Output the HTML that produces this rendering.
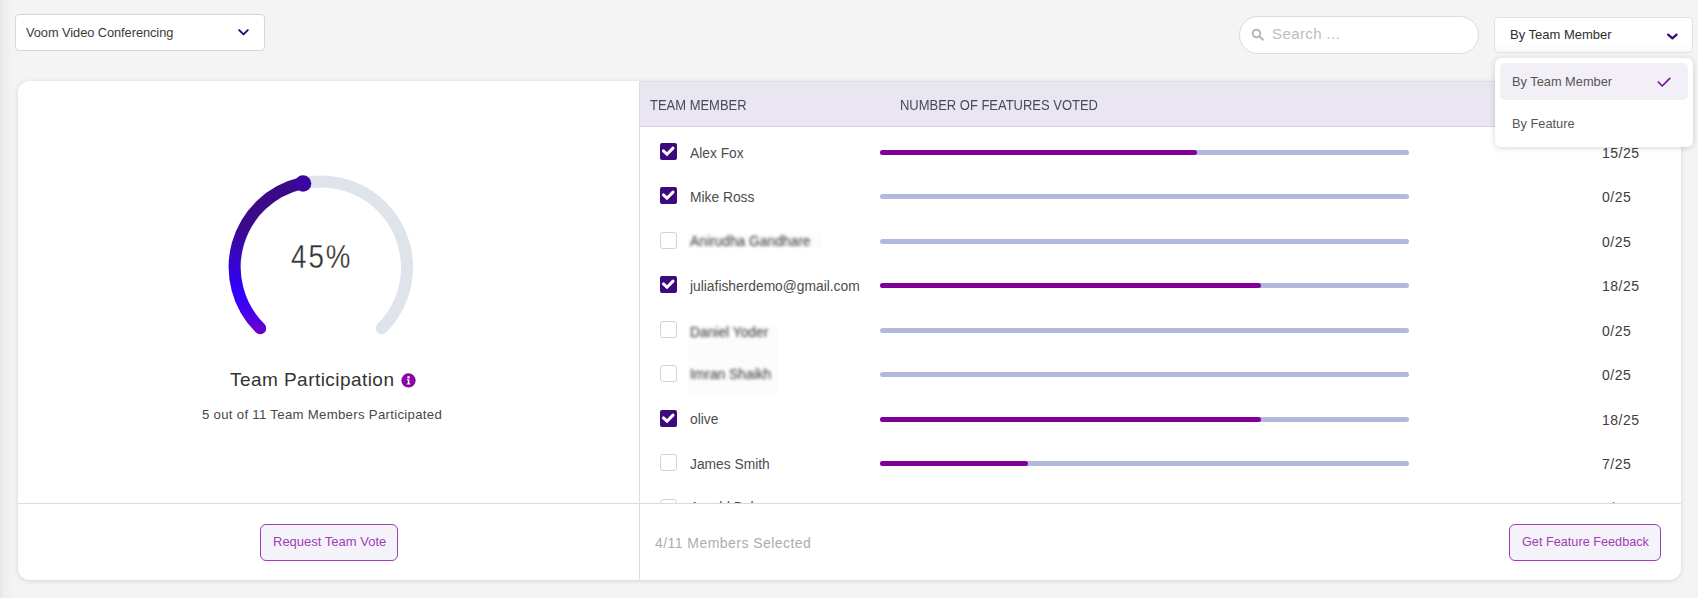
<!DOCTYPE html>
<html>
<head>
<meta charset="utf-8">
<style>
*{box-sizing:border-box;margin:0;padding:0}
html,body{width:1698px;height:598px;overflow:hidden}
body{background:#f4f4f4;font-family:"Liberation Sans",sans-serif;color:#333;position:relative}
.lshadow{position:absolute;left:0;top:0;width:14px;height:598px;background:linear-gradient(to right,#e5e4e9 0px,#e9e9ec 1.5px,#eeeef0 3px,#f0f0f2 7px,#f4f4f4 14px)}
.abs{position:absolute}
.t{position:absolute;white-space:nowrap;line-height:1}
.sel{position:absolute;left:15px;top:14px;width:250px;height:37px;background:#fff;border:1px solid #d6d6d6;border-radius:4px}
.search{position:absolute;left:1239px;top:16px;width:240px;height:38px;background:#fff;border:1px solid #dcdcdc;border-radius:19px}
.sort{position:absolute;left:1494px;top:17px;width:199px;height:36px;background:linear-gradient(#fff 70%,#f9f9fa);border:1px solid #e0e0e4;border-radius:4px}
.card{position:absolute;left:18px;top:81px;width:1663px;height:499px;background:#fff;border-radius:12px;box-shadow:0 1px 5px rgba(0,0,0,0.13);overflow:hidden}
.vdiv{position:absolute;left:621px;top:0;width:1px;height:499px;background:#dddde2}
.hdiv{position:absolute;left:0;top:422px;width:1663px;height:1px;background:#dcdbe2}
.thead{position:absolute;left:622px;top:0;width:1041px;height:46px;background:#e9e5f1;border-top:1px solid #dde0e4;border-bottom:1px solid #d3d0dc}
.cb{position:absolute;left:660px;width:17px;height:17px;border-radius:2px}
.cb.on{background:#3a0a7e}
.cb.off{background:#fff;border:1px solid #d3d3d3;border-radius:3px}
.name{position:absolute;left:690px;font-size:13.8px;color:#4c4c4c;white-space:nowrap;line-height:1}
.blur{filter:blur(1.4px);color:#333;padding:0}
.bar{position:absolute;left:880px;width:529px;height:5px;border-radius:3px;background:#b3b8df}
.fill{position:absolute;left:0;top:0;height:5px;border-radius:3px;background:#800097}
.cnt{position:absolute;left:1602px;font-size:14px;letter-spacing:0.5px;color:#3d3d3d;white-space:nowrap;line-height:1}
.btn{position:absolute;height:37px;border:1.5px solid #a23cb9;border-radius:6px;background:#f4f3f9;color:#a23cb9;font-size:13px;line-height:1}
.menu{position:absolute;left:1495px;top:58px;width:198px;height:89px;background:#fff;border-radius:6px;box-shadow:0 1px 6px rgba(0,0,0,0.16)}
.mi{position:absolute;left:5px;top:5px;width:188px;height:37px;background:#f2eff7;border-radius:5px}
</style>
</head>
<body>
<div class="lshadow"></div>

<!-- product select -->
<div class="sel"></div>
<div class="t" style="left:26px;top:27px;font-size:12.8px;color:#3a3a3a;letter-spacing:-0.05px">Voom Video Conferencing</div>
<svg class="abs" style="left:237px;top:29px" width="12" height="8" viewBox="0 0 12 8"><path d="M2.2 1.1 L6.5 5.4 L10.8 1.1" fill="none" stroke="#36067f" stroke-width="1.9" stroke-linecap="round" stroke-linejoin="round"/></svg>

<!-- search -->
<div class="search"></div>
<svg class="abs" style="left:1251px;top:28px" width="14" height="13" viewBox="0 0 14 13"><circle cx="5.5" cy="5.5" r="3.8" fill="none" stroke="#b9b9b9" stroke-width="2"/><path d="M8.3 8.3 L11.8 11.6" stroke="#b9b9b9" stroke-width="2.2" stroke-linecap="round"/></svg>
<div class="t" style="left:1272px;top:26px;font-size:15px;color:#bdbdbd;letter-spacing:0.4px">Search ...</div>

<!-- sort select -->
<div class="sort"></div>
<div class="t" style="left:1510px;top:28px;font-size:13px;color:#2e2e2e">By Team Member</div>
<svg class="abs" style="left:1666px;top:32px" width="12" height="9" viewBox="0 0 12 9"><path d="M2.2 2.6 L6.4 6.4 L10.6 2.6" fill="none" stroke="#3a0a80" stroke-width="2.3" stroke-linecap="round" stroke-linejoin="round"/></svg>

<!-- card -->
<div class="card">
  <div class="thead"></div>
  <div class="vdiv"></div>
  <div class="hdiv"></div>
</div>

<!-- gauge -->
<svg class="abs" style="left:221px;top:167px" width="200" height="200" viewBox="221 167 200 200">
  <defs>
    <linearGradient id="g1" x1="260" y1="334" x2="300" y2="180" gradientUnits="userSpaceOnUse">
      <stop offset="0" stop-color="#7000c0"/>
      <stop offset="0.09" stop-color="#5000e8"/>
      <stop offset="0.2" stop-color="#3400ff"/>
      <stop offset="0.27" stop-color="#3300f2"/>
      <stop offset="0.45" stop-color="#3806c0"/>
      <stop offset="0.62" stop-color="#3a0a8c"/>
      <stop offset="1" stop-color="#3a0a88"/>
    </linearGradient>
  </defs>
  <path d="M260.2 328.3 A86 86 0 1 1 381.8 328.3" fill="none" stroke="#dfe3ea" stroke-width="12" stroke-linecap="round"/>
  <path d="M260.2 328.3 A86 86 0 0 1 300.9 183.4" fill="none" stroke="url(#g1)" stroke-width="12" stroke-linecap="round"/>
  <circle cx="303" cy="183.5" r="8.3" fill="#3a05a0"/>
</svg>
<svg class="abs" style="left:280px;top:235px" width="90" height="40" viewBox="0 0 90 40"><text x="11" y="32.9" font-family="Liberation Sans" font-size="33" letter-spacing="2.4" fill="#333" stroke="#fff" stroke-width="0.3" transform="translate(11 0) scale(0.84 1) translate(-11 0)">45%</text></svg>
<div class="t" style="left:230px;top:370px;font-size:19px;color:#333;letter-spacing:0.45px">Team Participation</div>
<svg class="abs" style="left:400.5px;top:373px" width="15" height="15" viewBox="0 0 15 15"><circle cx="7.5" cy="7.4" r="7.1" fill="#8406a4"/><circle cx="7.5" cy="4.2" r="1.2" fill="#fff"/><path d="M5.8 6.3 H8.4 V10.4 H9.4 V11.4 H5.8 V10.4 H6.8 V7.3 H5.8 Z" fill="#fff"/></svg>
<div class="t" style="left:202px;top:407.6px;font-size:13.2px;color:#484848;letter-spacing:0.3px">5 out of 11 Team Members Participated</div>

<!-- table header text -->
<div class="t" style="left:650px;top:98.6px;font-size:13.8px;color:#4a4a55;transform:scaleX(0.94);transform-origin:0 0">TEAM MEMBER</div>
<div class="t" style="left:900px;top:98.6px;font-size:13.8px;color:#4a4a55;transform:scaleX(0.94);transform-origin:0 0">NUMBER OF FEATURES VOTED</div>

<!-- rows -->
<div class="rowclip" style="position:absolute;left:640px;top:127px;width:1040px;height:376px;overflow:hidden"><div style="position:absolute;left:-640px;top:-127px;width:1698px;height:598px"><div class="cb on" style="top:143.00px"><svg width="17" height="17" viewBox="0 0 17 17" style="position:absolute;left:0;top:0"><path d="M3.4 7.9 L7 11.2 L13 5.1" fill="none" stroke="#fff" stroke-width="3" stroke-linecap="round" stroke-linejoin="miter"/></svg></div>
<div class="name" style="top:146.70px">Alex Fox</div>
<div class="bar" style="top:150.00px"><div class="fill" style="width:317.4px"></div></div>
<div class="cnt" style="top:145.80px">15/25</div>
<div class="cb on" style="top:187.45px"><svg width="17" height="17" viewBox="0 0 17 17" style="position:absolute;left:0;top:0"><path d="M3.4 7.9 L7 11.2 L13 5.1" fill="none" stroke="#fff" stroke-width="3" stroke-linecap="round" stroke-linejoin="miter"/></svg></div>
<div class="name" style="top:191.15px">Mike Ross</div>
<div class="bar" style="top:194.45px"><div class="fill" style="width:0.0px"></div></div>
<div class="cnt" style="top:190.25px">0/25</div>
<div class="cb off" style="top:231.90px"></div>
<div style="position:absolute;left:688px;top:233px;width:134px;height:15px;background:rgba(0,0,0,0.012)"></div><div style="position:absolute;left:688px;top:325px;width:90px;height:70px;background:rgba(0,0,0,0.012)"></div><div class="name blur" style="top:234.90px">Anirudha Gandhare</div>
<div class="bar" style="top:238.90px"><div class="fill" style="width:0.0px"></div></div>
<div class="cnt" style="top:234.70px">0/25</div>
<div class="cb on" style="top:276.35px"><svg width="17" height="17" viewBox="0 0 17 17" style="position:absolute;left:0;top:0"><path d="M3.4 7.9 L7 11.2 L13 5.1" fill="none" stroke="#fff" stroke-width="3" stroke-linecap="round" stroke-linejoin="miter"/></svg></div>
<div class="name" style="top:280.05px">juliafisherdemo@gmail.com</div>
<div class="bar" style="top:283.35px"><div class="fill" style="width:380.9px"></div></div>
<div class="cnt" style="top:279.15px">18/25</div>
<div class="cb off" style="top:320.80px"></div>
<div class="name blur" style="top:326.30px">Daniel Yoder</div>
<div class="bar" style="top:327.80px"><div class="fill" style="width:0.0px"></div></div>
<div class="cnt" style="top:323.60px">0/25</div>
<div class="cb off" style="top:365.25px"></div>
<div class="name blur" style="top:368.25px">Imran Shaikh</div>
<div class="bar" style="top:372.25px"><div class="fill" style="width:0.0px"></div></div>
<div class="cnt" style="top:368.05px">0/25</div>
<div class="cb on" style="top:409.70px"><svg width="17" height="17" viewBox="0 0 17 17" style="position:absolute;left:0;top:0"><path d="M3.4 7.9 L7 11.2 L13 5.1" fill="none" stroke="#fff" stroke-width="3" stroke-linecap="round" stroke-linejoin="miter"/></svg></div>
<div class="name" style="top:413.40px">olive</div>
<div class="bar" style="top:416.70px"><div class="fill" style="width:380.9px"></div></div>
<div class="cnt" style="top:412.50px">18/25</div>
<div class="cb off" style="top:454.15px"></div>
<div class="name" style="top:457.85px">James Smith</div>
<div class="bar" style="top:461.15px"><div class="fill" style="width:148.1px"></div></div>
<div class="cnt" style="top:456.95px">7/25</div>
<div class="cb off" style="top:498.60px"></div>
<div class="name" style="top:501.3px">Arnold Baker</div>
<div class="bar" style="top:505.60px"><div class="fill" style="width:84.6px"></div></div>
<div class="cnt" style="top:501.40px">4/25</div></div></div>

<!-- footer -->
<div class="btn" style="left:260px;top:524px;width:138px"><span class="t" style="left:12px;top:10px">Request Team Vote</span></div>
<div class="t" style="left:655px;top:536px;font-size:14px;color:#acacac;letter-spacing:0.45px">4/11 Members Selected</div>
<div class="btn" style="left:1509px;top:524px;width:152px"><span class="t" style="left:12px;top:11px;font-size:12.7px">Get Feature Feedback</span></div>

<!-- dropdown menu -->
<div class="menu">
  <div class="mi"></div>
</div>
<div class="t" style="left:1512px;top:76px;font-size:12.8px;color:#555">By Team Member</div>
<svg class="abs" style="left:1656px;top:76px" width="16" height="13" viewBox="0 0 16 13"><path d="M2.3 6 L6.2 10 L13.8 2.3" fill="none" stroke="#7a10a0" stroke-width="1.7" stroke-linecap="round" stroke-linejoin="round"/></svg>
<div class="t" style="left:1512px;top:118px;font-size:12.8px;color:#555">By Feature</div>
</body>
</html>
